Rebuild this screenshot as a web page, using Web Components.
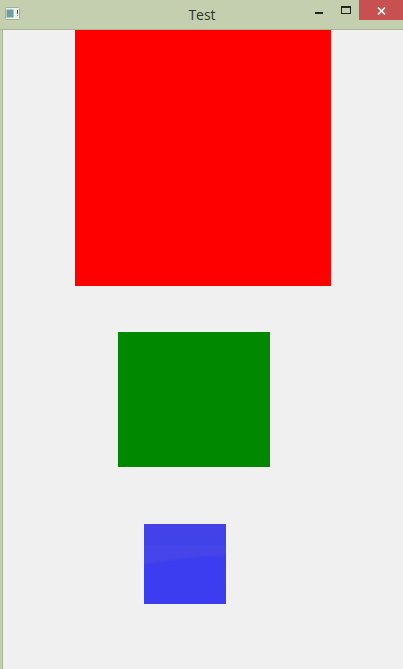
<!DOCTYPE html>
<html>
<head>
<meta charset="utf-8">
<title>Test</title>
<style>
    html, body { margin: 0; padding: 0; background: #f0f0f0; }
</style>
</head>
<body>
<win-window caption="Test">
    <color-box color="#ff0000" w="256" h="256" left="72" top="0"></color-box>
    <color-box color="#008800" w="152" h="135" left="115" top="46"></color-box>
    <color-box color="#3c3cf0" w="82" h="80" left="141" top="57" glossy></color-box>
</win-window>

<script>
// Title bar with app icon, caption and the three window buttons
class WinTitlebar extends HTMLElement {
    connectedCallback() {
        this.attachShadow({ mode: 'open' });
        this.shadowRoot.innerHTML = `
            <style>
                :host {
                    display: flex;
                    height: 29px;
                    background: #c4cfaf;
                    border-bottom: 1px solid #a9b596;
                    font-family: 'Segoe UI', 'Open Sans', 'Noto Sans', sans-serif;
                    color: #30342b;
                    position: relative;
                }
                .icon {
                    margin: 7px 0 0 5px;
                    width: 15px;
                    height: 13px;
                    display: block;
                }
                .caption {
                    position: absolute;
                    left: 1px;
                    right: 0;
                    top: 6px;
                    text-align: center;
                    font-size: 14px;
                    line-height: 18px;
                }
                .buttons {
                    margin-left: auto;
                    display: flex;
                    align-items: flex-start;
                    position: relative;
                }
                .btn { display: flex; justify-content: center; align-items: flex-start; }
                .min { width: 27px; height: 20px; padding-left: 1px; box-sizing: border-box; }
                .max { width: 27px; height: 20px; }
                .close { width: 44px; height: 20px; background: #c75050; }
                svg { display: block; }
            </style>
            <svg class="icon" viewBox="0 0 15 13">
                <rect x="0.5" y="0.5" width="14" height="12" rx="1" fill="#eef1ea" stroke="#a4ad98"/>
                <rect x="1.5" y="2.5" width="7" height="8" fill="#6f9f9c"/>
                <rect x="12" y="3" width="1" height="4" fill="#4a5045"/>
                <rect x="12" y="8" width="1" height="1" fill="#7c8374"/>
            </svg>
            <div class="caption"><slot></slot></div>
            <div class="buttons">
                <div class="btn min">
                    <svg width="8" height="2" style="margin-top:12px"><rect width="8" height="2" fill="#20241c"/></svg>
                </div>
                <div class="btn max">
                    <svg width="10" height="8" style="margin-top:6px" viewBox="0 0 10 8">
                        <rect x="0.5" y="0.5" width="9" height="7" fill="none" stroke="#20241c"/>
                        <rect x="0" y="0" width="10" height="2" fill="#20241c"/>
                    </svg>
                </div>
                <div class="btn close">
                    <svg width="9" height="8" style="margin-top:7px" viewBox="0 0 9 8">
                        <path d="M1 0.5 L8 7.5 M8 0.5 L1 7.5" stroke="#fff" stroke-width="1.6" fill="none"/>
                    </svg>
                </div>
            </div>
        `;
    }
}

// Window frame: title bar on top, left border, client area in a column
class WinWindow extends HTMLElement {
    connectedCallback() {
        const caption = this.getAttribute('caption') || '';
        this.attachShadow({ mode: 'open' });
        this.shadowRoot.innerHTML = `
            <style>
                :host {
                    display: flex;
                    flex-direction: column;
                    width: 403px;
                    height: 669px;
                    overflow: hidden;
                    background: #f0f0f0;
                }
                .body { flex: 1; display: flex; min-height: 0; }
                .edge {
                    width: 2px;
                    background: #c4cfaf;
                    border-right: 1px solid #a9b596;
                }
                .client {
                    flex: 1;
                    display: flex;
                    flex-direction: column;
                    align-items: flex-start;
                }
            </style>
            <win-titlebar>${caption}</win-titlebar>
            <div class="body">
                <div class="edge"></div>
                <div class="client"><slot></slot></div>
            </div>
        `;
    }
}

// Plain coloured square, placed by margins inside the client column
class ColorBox extends HTMLElement {
    connectedCallback() {
        const a = (n) => this.getAttribute(n);
        this.attachShadow({ mode: 'open' });
        const gloss = this.hasAttribute('glossy') ? `
            <svg viewBox="0 0 82 80" width="100%" height="100%" preserveAspectRatio="none">
                <defs>
                    <linearGradient id="g" x1="0" y1="0" x2="0" y2="1">
                        <stop offset="0" stop-color="#4242e8"/>
                        <stop offset="1" stop-color="#4545e9"/>
                    </linearGradient>
                    <filter id="soft"><feGaussianBlur stdDeviation="0.8"/></filter>
                </defs>
                <path d="M-4 -4 H86 V31 C55 33 25 36 -4 41 Z" fill="url(#g)" filter="url(#soft)"/>
            </svg>` : '';
        this.shadowRoot.innerHTML = `
            <style>
                :host {
                    display: block;
                    flex: none;
                    width: ${a('w')}px;
                    height: ${a('h')}px;
                    margin-left: ${a('left')}px;
                    margin-top: ${a('top')}px;
                    background: ${a('color')};
                    overflow: hidden;
                }
                svg { display: block; }
            </style>
            ${gloss}
        `;
    }
}

customElements.define('win-titlebar', WinTitlebar);
customElements.define('win-window', WinWindow);
customElements.define('color-box', ColorBox);
</script>
</body>
</html>
